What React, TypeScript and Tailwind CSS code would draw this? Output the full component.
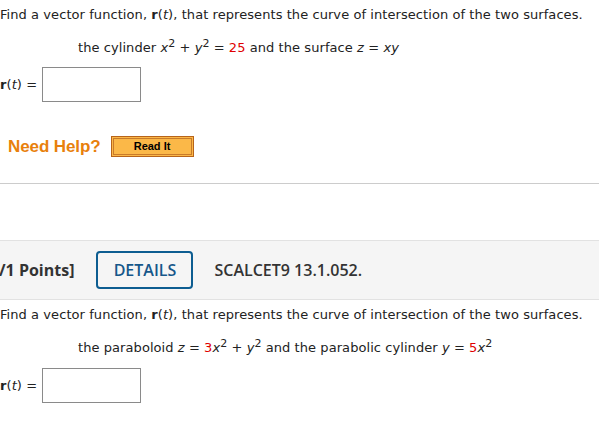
import React from 'react';

const V = ({ children }: { children: React.ReactNode }) => <i className="italic">{children}</i>;
const Red = ({ children }: { children: React.ReactNode }) => <span className="text-[#e00000]">{children}</span>;
const Sup = ({ children }: { children: React.ReactNode }) => (
  <sup className="text-[11px] leading-none">{children}</sup>
);

const AnswerRow: React.FC = () => (
  <div className="flex items-center h-[35px]">
    <span className="w-[42px] shrink-0">
      <b className="font-bold">r</b>(<V>t</V>) =
    </span>
    <div className="w-[99px] h-[35px] border border-[#8a8a8a] bg-white" />
  </div>
);

const App: React.FC = () => {
  return (
    <div className="w-[599px] h-[425px] overflow-hidden bg-white text-[#222] text-[13px] leading-[16px] tracking-[0.07px] font-['DejaVu_Sans','Verdana',sans-serif]">
      <div className="pt-[7px] whitespace-nowrap">
        Find a vector function, <b className="font-bold">r</b>(<V>t</V>), that represents the curve of intersection of the two surfaces.
      </div>
      <div className="mt-[17px] pl-[78px] whitespace-nowrap">
        the cylinder <V>x</V><Sup>2</Sup> + <V>y</V><Sup>2</Sup> = <Red>25</Red> and the surface <V>z</V> = <V>xy</V>
      </div>
      <div className="mt-[11px]">
        <AnswerRow />
      </div>

      <div className="mt-[34px] flex items-center pl-[8px] h-[21px] tracking-normal">
        <span className="font-['Liberation_Sans',Arial,sans-serif] font-bold text-[17px] text-[#e8800c] tracking-[-0.1px]">
          Need Help?
        </span>
        <button className="ml-[10px] w-[83px] h-[21px] border border-[#b8641a] bg-[#fbb848] p-[1px]">
          <span className="block h-full border border-[#c87a2a] font-['Liberation_Sans',Arial,sans-serif] font-bold text-[11px] leading-[15px] text-black">
            Read It
          </span>
        </button>
      </div>

      <div className="mt-[26px] h-px bg-[#cccccc]" />

      <div className="mt-[56px] h-[60px] bg-[#f5f5f5] border-y border-[#e2e2e2] flex items-center font-['Open_Sans',sans-serif] text-[16px] tracking-normal">
        <span className="font-bold text-[#333] ml-[-1px]">/1 Points]</span>
        <div className="ml-[22px] w-[97px] h-[38px] border-2 border-[#0d5d91] rounded-[4px] flex items-center justify-center text-[#16578a] font-semibold">
          DETAILS
        </div>
        <span className="ml-[21px] font-semibold text-[#333]">SCALCET9 13.1.052.</span>
      </div>

      <div className="mt-[7px] whitespace-nowrap">
        Find a vector function, <b className="font-bold">r</b>(<V>t</V>), that represents the curve of intersection of the two surfaces.
      </div>
      <div className="mt-[17px] pl-[78px] whitespace-nowrap">
        the paraboloid <V>z</V> = <Red>3</Red><V>x</V><Sup>2</Sup> + <V>y</V><Sup>2</Sup> and the parabolic cylinder <V>y</V> = <Red>5</Red><V>x</V><Sup>2</Sup>
      </div>
      <div className="mt-[12px]">
        <AnswerRow />
      </div>
    </div>
  );
};

export default App;
